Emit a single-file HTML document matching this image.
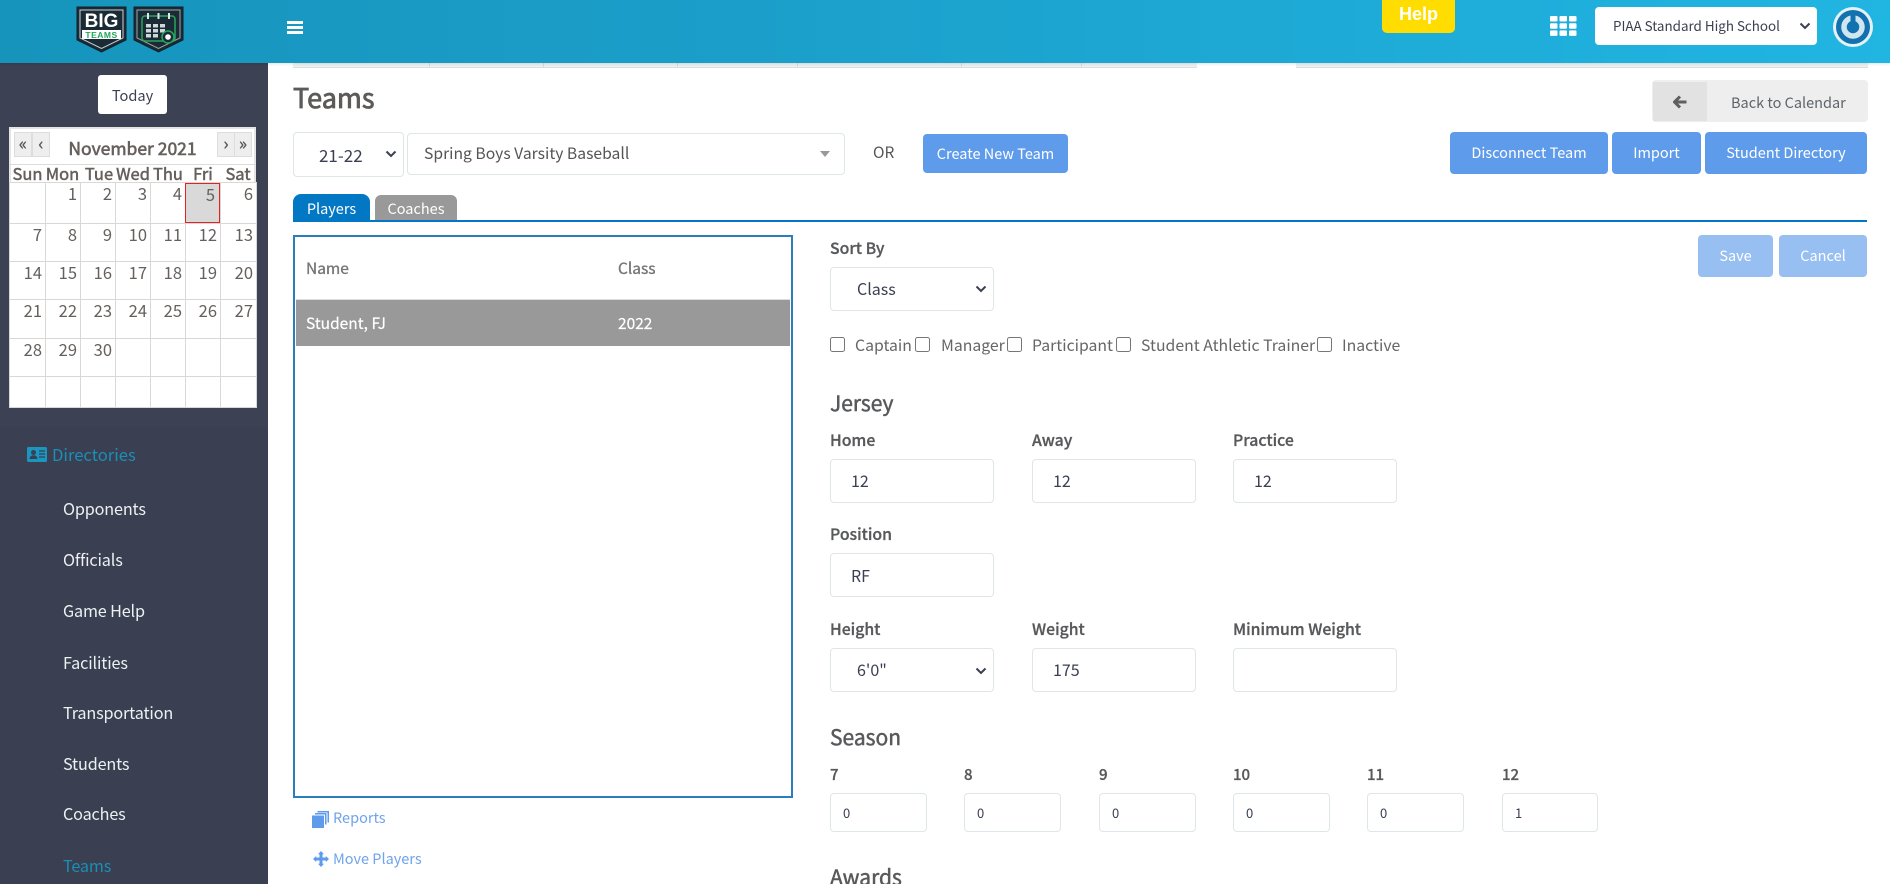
<!DOCTYPE html>
<html><head><meta charset="utf-8"><title>Teams</title>
<style>
html,body{margin:0;padding:0;width:1890px;height:884px;overflow:hidden;background:#fff}
*{box-sizing:border-box}
body{font-family:"Noto Sans CJK SC","Liberation Sans",sans-serif;color:#58666e;font-size:16px;position:relative}
.a{position:absolute}
.t{position:absolute;white-space:nowrap;line-height:20px}
.lb{position:absolute;white-space:nowrap;line-height:20px;font-size:15.8px;font-weight:500;color:#58595b;-webkit-text-stroke:.3px #58595b}
.h{position:absolute;white-space:nowrap;line-height:26px;font-size:21px;color:#58595b;-webkit-text-stroke:.5px #58595b}
input,select{position:absolute;font-family:inherit;background:#fff;border:1px solid #dfe6e8;border-radius:4px;color:#3a3f51;font-size:16px;outline:none;margin:0}
select{-webkit-appearance:none;appearance:none}
.chev{position:absolute;width:12px;height:8px;pointer-events:none}
input[type=text]{padding:0 0 2px 20px}
input.s{font-size:13px;padding:0 0 0 12px;height:39px;width:97px;top:793px}
input[type=checkbox]{width:15px;height:15px;top:337px;margin:0;border:1px solid #555}
.btn{position:absolute;background:#5e9bea;color:#fff;border-radius:4px;text-align:center;font-size:14.5px;height:42px;line-height:42px;white-space:nowrap}
.nav{left:63px;font-size:16.2px;letter-spacing:-.15px;color:#edf1f2}
.cb{left:0;position:absolute;background:#eee;border:1px solid #ddd;width:18px;height:25px;top:132px;text-align:center;line-height:20px;font-size:17px;color:#555;-webkit-text-stroke:.3px #555}
.wd{position:absolute;white-space:nowrap;line-height:20px;top:163px;text-align:center;font-size:16.5px;color:#66605c;-webkit-text-stroke:.5px #66605c}
table{position:absolute;left:9px;top:182px;width:247px;border-collapse:collapse;table-layout:fixed;background:#fff}
td{border:1px solid #d8d8d8;padding:0 3px 0 0;text-align:right;vertical-align:top;font-size:16.5px;line-height:20px;color:#66605c}
</style></head>
<body>
<!-- sidebar -->
<div class="a" style="left:0;top:63px;width:268px;height:821px;background:#3a3f51"></div>
<div class="a" style="left:0;top:63px;width:268px;height:364px;background:#3c4153"></div>

<!-- sub tabs under header -->
<div class="a" style="left:293px;top:60px;width:904px;height:8px;background:#eef1f1;border-bottom:1px solid #dcdfe2"></div>
<div class="a" style="left:1296px;top:60px;width:572px;height:8px;background:#eef1f1;border-bottom:1px solid #dcdfe2"></div>
<div class="a" style="left:429px;top:60px;width:1px;height:8px;background:#d8dcde"></div>
<div class="a" style="left:543px;top:60px;width:1px;height:8px;background:#d8dcde"></div>
<div class="a" style="left:677px;top:60px;width:1px;height:8px;background:#d8dcde"></div>
<div class="a" style="left:797px;top:60px;width:1px;height:8px;background:#d8dcde"></div>
<div class="a" style="left:961px;top:60px;width:1px;height:8px;background:#d8dcde"></div>
<div class="a" style="left:1081px;top:60px;width:1px;height:8px;background:#d8dcde"></div>

<!-- header -->
<div class="a" style="left:0;top:0;width:1890px;height:63px;background:linear-gradient(90deg,#1694bc 0%,#1b9fca 40%,#21b5e2 100%);box-shadow:0 1px 3px rgba(0,0,0,.12)"></div>

<!-- logos -->
<svg class="a" style="left:76px;top:5px" width="110" height="48" viewBox="0 0 110 48">
<path d="M1 2H50V35L25.500 47L1 35Z" fill="#1b2b35" stroke="#11202a"/>
<path d="M4 5H47V33L25.500 43.500L4 33Z" fill="none" stroke="#c9d3d6" stroke-width="1"/>
<text x="25.500" y="22" text-anchor="middle" font-family="Liberation Sans" font-weight="bold" font-size="19" fill="#fff">BIG</text>
<rect x="6" y="25" width="39" height="9" fill="#fff"/>
<text x="25.500" y="33" text-anchor="middle" font-family="Liberation Sans" font-weight="bold" font-size="8.500" fill="#22a559" letter-spacing=".5">TEAMS</text>
<path d="M58 2H107V35L82.500 47L58 35Z" fill="#1b2b35" stroke="#11202a"/>
<path d="M61 5H104V33L82.500 43.500L61 33Z" fill="none" stroke="#9aa8ab" stroke-width="1"/>
<rect x="66" y="11" width="33" height="25" rx="3" fill="none" stroke="#2aa35d" stroke-width="1.500"/>
<path d="M72 8v6M82.500 8v6M93 8v6" stroke="#dfe6e6" stroke-width="2"/>
<g fill="#cfd8d8"><rect x="70" y="19" width="5" height="3.500"/><rect x="77" y="19" width="5" height="3.500"/><rect x="84" y="19" width="5" height="3.500"/><rect x="70" y="24" width="5" height="3.500"/><rect x="77" y="24" width="5" height="3.500"/><rect x="84" y="24" width="5" height="3.500"/><rect x="70" y="29" width="5" height="3.500"/><rect x="77" y="29" width="5" height="3.500"/></g>
<circle cx="92" cy="32" r="6" fill="#1b2b35" stroke="#2aa35d" stroke-width="1.500"/><circle cx="92" cy="32" r="2.800" fill="#fff"/>
</svg>

<!-- hamburger -->
<div class="a" style="left:287px;top:21px;width:16px;height:3px;background:#fff"></div>
<div class="a" style="left:287px;top:26px;width:16px;height:3px;background:#fff"></div>
<div class="a" style="left:287px;top:31px;width:16px;height:3px;background:#fff"></div>

<!-- help -->
<div class="a" style="left:1382px;top:0;width:73px;height:33px;background:#ffdd00;border-radius:0 0 5px 5px;text-align:center;color:#fff;font:bold 18px/28px 'Liberation Sans',sans-serif">Help</div>

<!-- grid icon -->
<svg class="a" style="left:1550px;top:16px" width="27" height="20" viewBox="0 0 27 20" fill="#fff">
<rect x="0" y="0" width="7.500" height="5.500" rx="1"/><rect x="9.500" y="0" width="7.500" height="5.500" rx="1"/><rect x="19" y="0" width="7.500" height="5.500" rx="1"/>
<rect x="0" y="7.200" width="7.500" height="5.500" rx="1"/><rect x="9.500" y="7.200" width="7.500" height="5.500" rx="1"/><rect x="19" y="7.200" width="7.500" height="5.500" rx="1"/>
<rect x="0" y="14.400" width="7.500" height="5.500" rx="1"/><rect x="9.500" y="14.400" width="7.500" height="5.500" rx="1"/><rect x="19" y="14.400" width="7.500" height="5.500" rx="1"/>
</svg>

<select style="left:1595px;top:7px;width:222px;height:38px;border:0;padding:0 0 2px 18px;font-size:13.4px;color:#3a3f51"><option>PIAA Standard High School</option></select>
<svg class="chev" style="left:1799px;top:22px" viewBox="0 0 12 8"><path d="M1.500 1.500L6 6L10.500 1.500" fill="none" stroke="#3a3f51" stroke-width="2"/></svg>

<!-- power -->
<svg class="a" style="left:1833px;top:7px" width="40" height="40" viewBox="0 0 40 40">
<circle cx="20" cy="20" r="20" fill="#e4f2f8"/><circle cx="20" cy="20" r="17" fill="#1272b0"/>
<circle cx="20" cy="20" r="9" fill="none" stroke="#cfe6f1" stroke-width="5.500"/>
<rect x="17.500" y="6" width="5" height="12" fill="#1272b0"/>
</svg>

<!-- today -->
<div class="a" style="left:98px;top:75px;width:69px;height:39px;background:#fff;border-radius:3px;text-align:center;line-height:41px;font-size:14.600px;color:#3a3f51">Today</div>

<!-- calendar -->
<div class="a" style="left:9px;top:127px;width:247px;height:281px;background:#fff;border:2px solid #e4e4e4;border-bottom:0"></div>
<div class="cb" style="left:14px">«</div><div class="cb" style="left:32px">‹</div><div class="cb" style="left:217px">›</div><div class="cb" style="left:234px">»</div>
<div class="t" style="left:50px;width:165px;top:139px;text-align:center;font-size:17.500px;color:#66605c;-webkit-text-stroke:.6px #66605c">November 2021</div>
<div class="a" style="left:9px;top:164px;width:247px;height:1px;background:#dcdcdc"></div>
<div class="wd" style="left:9px;width:37px">Sun</div>
<div class="wd" style="left:44px;width:37px">Mon</div>
<div class="wd" style="left:81px;width:36px">Tue</div>
<div class="wd" style="left:114px;width:38px">Wed</div>
<div class="wd" style="left:150px;width:36px">Thu</div>
<div class="wd" style="left:185px;width:36px">Fri</div>
<div class="wd" style="left:220px;width:36px">Sat</div>
<table>
<colgroup><col style="width:36px"><col style="width:35px"><col style="width:35px"><col style="width:35px"><col style="width:35px"><col style="width:35px"><col style="width:36px"></colgroup>
<tr style="height:41px"><td></td><td>1</td><td>2</td><td>3</td><td>4</td><td style="background:#d9d9d9;padding-top:1px;padding-right:5px">5</td><td>6</td></tr>
<tr style="height:38px"><td>7</td><td>8</td><td>9</td><td>10</td><td>11</td><td>12</td><td>13</td></tr>
<tr style="height:38px"><td>14</td><td>15</td><td>16</td><td>17</td><td>18</td><td>19</td><td>20</td></tr>
<tr style="height:39px"><td>21</td><td>22</td><td>23</td><td>24</td><td>25</td><td>26</td><td>27</td></tr>
<tr style="height:38px"><td>28</td><td>29</td><td>30</td><td></td><td></td><td></td><td></td></tr>
<tr style="height:31px"><td></td><td></td><td></td><td></td><td></td><td></td><td></td></tr>
</table>
<div class="a" style="left:185px;top:183px;width:35px;height:40px;border:1.500px solid #e3221f"></div>

<!-- nav -->
<svg class="a" style="left:27px;top:447px" width="20" height="16" viewBox="0 0 20 16">
<rect width="20" height="15" rx="1.500" fill="#1a96bf"/>
<circle cx="6.500" cy="5.500" r="2.500" fill="#3a3f51"/><path d="M2.500 12c0-5 8-5 8 0z" fill="#3a3f51"/>
<path d="M12 4h6M12 7h6M12 10h6" stroke="#3a3f51" stroke-width="1.200"/>
</svg>
<div class="t" style="left:52px;top:444px;font-size:16.600px;color:#1a8fb8">Directories</div>
<div class="t nav" style="top:498px">Opponents</div>
<div class="t nav" style="top:549px">Officials</div>
<div class="t nav" style="top:600px">Game Help</div>
<div class="t nav" style="top:652px">Facilities</div>
<div class="t nav" style="top:702px">Transportation</div>
<div class="t nav" style="top:753px">Students</div>
<div class="t nav" style="top:803px">Coaches</div>
<div class="t nav" style="top:855px;color:#1a8fb8">Teams</div>

<!-- title row -->
<div class="t" style="left:293px;top:82px;line-height:30px;font-size:27px;color:#5d5a58;-webkit-text-stroke:.8px #5d5a58">Teams</div>
<div class="a" style="left:1652px;top:80px;width:216px;height:42px;background:#eee;border-radius:4px"></div>
<div class="a" style="left:1653px;top:82px;width:54px;height:39px;background:#e2e2e2"></div>
<svg class="a" style="left:1673px;top:95px" width="14" height="14" viewBox="0 0 14 14"><path d="M7 1.500L1.500 7L7 12.500M2 7H13.500" fill="none" stroke="#5f5f5f" stroke-width="3"/></svg>
<div class="t" style="left:1731px;top:93px;font-size:14.500px;color:#5f6468">Back to Calendar</div>

<!-- selects row -->
<select style="left:293px;top:132px;width:111px;height:45px;padding-left:25px;font-size:17px"><option>21-22</option></select>
<svg class="chev" style="left:385px;top:150px" viewBox="0 0 12 8"><path d="M1.500 1.500L6 6L10.500 1.500" fill="none" stroke="#3a3f51" stroke-width="2"/></svg>
<div class="a" style="left:407px;top:133px;width:438px;height:42px;border:1px solid #dfe6e8;border-radius:4px"></div>
<div class="t" style="left:424px;top:143px;font-size:15.700px;color:#555">Spring Boys Varsity Baseball</div>
<div class="a" style="left:820px;top:151px;width:0;height:0;border-left:5px solid transparent;border-right:5px solid transparent;border-top:6px solid #999"></div>
<div class="t" style="left:873px;top:142px;font-size:15.500px;color:#555">OR</div>
<div class="btn" style="left:923px;top:134px;width:145px;height:39px;line-height:39px;font-size:14.500px">Create New Team</div>
<div class="btn" style="left:1450px;top:132px;width:158px">Disconnect Team</div>
<div class="btn" style="left:1612px;top:132px;width:89px">Import</div>
<div class="btn" style="left:1705px;top:132px;width:162px">Student Directory</div>

<!-- tabs -->
<div class="a" style="left:293px;top:194px;width:77px;height:26px;background:#0277c4;border-radius:8px 8px 0 0;color:#fff;text-align:center;line-height:29px;font-size:14.500px">Players</div>
<div class="a" style="left:375px;top:195px;width:82px;height:25px;background:#999;border-radius:6px 6px 0 0;color:#fff;text-align:center;line-height:27px;font-size:14.500px">Coaches</div>
<div class="a" style="left:293px;top:220px;width:1574px;height:2px;background:#0277c4"></div>

<!-- player panel -->
<div class="a" style="left:293px;top:235px;width:500px;height:563px;border:2px solid #2a7fbb"></div>
<div class="t" style="left:306px;top:258px;font-size:15.500px;color:#777;-webkit-text-stroke:.35px #777">Name</div>
<div class="t" style="left:618px;top:258px;font-size:15.500px;color:#777;-webkit-text-stroke:.35px #777">Class</div>
<div class="a" style="left:296px;top:299px;width:494px;height:1px;background:#ddd"></div>
<div class="a" style="left:296px;top:300px;width:494px;height:46px;background:#999"></div>
<div class="t" style="left:306px;top:313px;font-size:15.500px;color:#fff;-webkit-text-stroke:.2px #fff">Student, FJ</div>
<div class="t" style="left:618px;top:313px;font-size:15.500px;color:#fff;-webkit-text-stroke:.2px #fff">2022</div>

<svg class="a" style="left:312px;top:811px" width="17" height="17" viewBox="0 0 17 17" fill="#5e9bea">
<rect x="0" y="4.500" width="12" height="12.500"/><path d="M3 3.500V2H14.500V13.500H13V3.500Z"/><path d="M5.500 1.500V0H17V11.500H15.500V1.500Z"/>
</svg>
<div class="t" style="left:333px;top:808px;font-size:14.500px;color:#6fa3ec">Reports</div>
<svg class="a" style="left:313px;top:851px" width="16" height="16" viewBox="0 0 16 16" fill="#5e9bea">
<path d="M8 0L11 3.200H9.500V6.500H12.800V5L16 8L12.800 11V9.500H9.500V12.800H11L8 16L5 12.800H6.500V9.500H3.200V11L0 8L3.200 5V6.500H6.500V3.200H5Z"/>
</svg>
<div class="t" style="left:333px;top:849px;font-size:14.500px;color:#6fa3ec">Move Players</div>

<!-- right form -->
<div class="lb" style="left:830px;top:238px">Sort By</div>
<select style="left:830px;top:267px;width:164px;height:44px;padding:0 0 2px 26px"><option>Class</option></select>
<svg class="chev" style="left:975px;top:285px" viewBox="0 0 12 8"><path d="M1.500 1.500L6 6L10.500 1.500" fill="none" stroke="#3a3f51" stroke-width="2"/></svg>
<div class="btn" style="left:1698px;top:235px;width:75px;background:#97bff2">Save</div>
<div class="btn" style="left:1779px;top:235px;width:88px;background:#97bff2">Cancel</div>

<input type="checkbox" style="left:830px"><div class="t" style="left:855px;top:335px;font-size:15.800px;color:#666">Captain</div>
<input type="checkbox" style="left:915px"><div class="t" style="left:941px;top:335px;font-size:15.800px;color:#666">Manager</div>
<input type="checkbox" style="left:1007px"><div class="t" style="left:1032px;top:335px;font-size:15.800px;color:#666">Participant</div>
<input type="checkbox" style="left:1116px"><div class="t" style="left:1141px;top:335px;font-size:15.800px;color:#666">Student Athletic Trainer</div>
<input type="checkbox" style="left:1317px"><div class="t" style="left:1342px;top:335px;font-size:15.800px;color:#666">Inactive</div>

<div class="h" style="left:830px;top:390px">Jersey</div>
<div class="lb" style="left:830px;top:430px">Home</div>
<div class="lb" style="left:1032px;top:430px">Away</div>
<div class="lb" style="left:1233px;top:430px">Practice</div>
<input type="text" value="12" style="left:830px;top:459px;width:164px;height:44px">
<input type="text" value="12" style="left:1032px;top:459px;width:164px;height:44px">
<input type="text" value="12" style="left:1233px;top:459px;width:164px;height:44px">

<div class="lb" style="left:830px;top:524px">Position</div>
<input type="text" value="RF" style="left:830px;top:553px;width:164px;height:44px;padding-bottom:0">

<div class="lb" style="left:830px;top:619px">Height</div>
<div class="lb" style="left:1032px;top:619px">Weight</div>
<div class="lb" style="left:1233px;top:619px">Minimum Weight</div>
<select style="left:830px;top:648px;width:164px;height:44px;padding:0 0 2px 26px"><option>6'0"</option></select>
<svg class="chev" style="left:975px;top:667px" viewBox="0 0 12 8"><path d="M1.500 1.500L6 6L10.500 1.500" fill="none" stroke="#3a3f51" stroke-width="2"/></svg>
<input type="text" value="175" style="left:1032px;top:648px;width:164px;height:44px">
<input type="text" value="" style="left:1233px;top:648px;width:164px;height:44px">

<div class="h" style="left:830px;top:724px">Season</div>
<div class="lb" style="left:830px;top:765px;font-size:15px">7</div>
<div class="lb" style="left:964px;top:765px;font-size:15px">8</div>
<div class="lb" style="left:1099px;top:765px;font-size:15px">9</div>
<div class="lb" style="left:1233px;top:765px;font-size:15px">10</div>
<div class="lb" style="left:1367px;top:765px;font-size:15px">11</div>
<div class="lb" style="left:1502px;top:765px;font-size:15px">12</div>
<input type="text" class="s" value="0" style="left:830px">
<input type="text" class="s" value="0" style="left:964px">
<input type="text" class="s" value="0" style="left:1099px">
<input type="text" class="s" value="0" style="left:1233px">
<input type="text" class="s" value="0" style="left:1367px">
<input type="text" class="s" value="1" style="left:1502px;width:96px">
<div class="h" style="left:830px;top:864px">Awards</div>
</body></html>
